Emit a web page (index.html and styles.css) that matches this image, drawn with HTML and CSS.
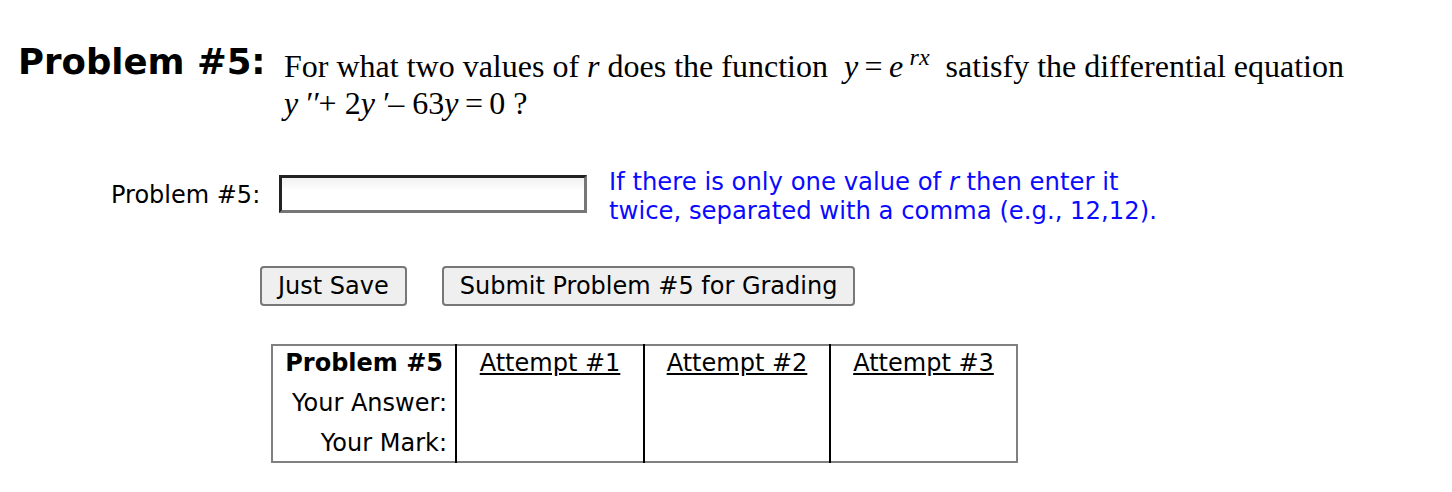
FILE: index.html
```html
<!DOCTYPE html>
<html>
<head>
<meta charset="utf-8">
<link rel="stylesheet" href="styles.css">
</head>
<body>
<div class="problem">
  <div class="ptitle">Problem #5:</div>
  <div class="question">For what two values of <i>r</i> does the function &nbsp;<i>y</i>&thinsp;=&thinsp;<i>e</i>&thinsp;<sup class="sup"><i>rx</i></sup>&nbsp; satisfy the differential equation<br><i>y</i>&thinsp;<span class="prime">′′</span>+ 2<i>y</i>&thinsp;<span class="prime">′</span>– 63<i>y</i>&thinsp;=&thinsp;0 ?</div>
</div>
<div class="answer-row">
  <label class="alabel">Problem #5:</label>
  <input class="ainput" type="text">
  <div class="hint">If there is only one value of <i>r</i> then enter it<br>twice, separated with a comma (e.g., 12,12).</div>
</div>
<div class="buttons">
  <button class="btn">Just Save</button>
  <button class="btn">Submit Problem #5 for Grading</button>
</div>
<table class="attempts">
  <colgroup>
    <col class="c1"><col class="c2"><col class="c3"><col class="c4">
  </colgroup>
  <tr class="r1">
    <th class="rowhead">Problem #5</th>
    <td class="ahead"><u>Attempt #1</u></td>
    <td class="ahead"><u>Attempt #2</u></td>
    <td class="ahead"><u>Attempt #3</u></td>
  </tr>
  <tr class="r2">
    <td class="rowlabel">Your Answer:</td>
    <td class="cell"></td>
    <td class="cell"></td>
    <td class="cell"></td>
  </tr>
  <tr class="r3">
    <td class="rowlabel">Your Mark:</td>
    <td class="cell"></td>
    <td class="cell"></td>
    <td class="cell"></td>
  </tr>
</table>
</body>
</html>
```
FILE: styles.css
```css
html, body {
  margin: 0;
  padding: 0;
  background: #fff;
  color: #000;
  font-family: "DejaVu Sans", Verdana, sans-serif;
}
.problem {
  display: flex;
  align-items: flex-start;
  padding: 40px 0 0 18px;
}
.ptitle {
  font-weight: bold;
  font-size: 35.5px;
  width: 266px;
  line-height: 44px;
  white-space: nowrap;
}
.question {
  font-family: "Liberation Serif", "Times New Roman", serif;
  font-size: 32px;
  line-height: 37px;
  padding-top: 8px;
}
.sup {
  font-size: 24px;
  vertical-align: 12px;
  line-height: 0;
}
.prime {
  font-size: 32px;
  font-style: italic;
  line-height: 0;
}
.answer-row {
  display: flex;
  align-items: flex-start;
  margin-top: 45px;
  padding-left: 111px;
}
.alabel {
  font-size: 24px;
  line-height: 28px;
  margin-top: 14px;
  width: 168px;
  white-space: nowrap;
}
.ainput {
  box-sizing: border-box;
  width: 308px;
  height: 38px;
  margin: 8px 0 0 0;
  border: 3px solid;
  border-color: #222 #777 #777 #222;
  background: linear-gradient(#f1f1f1, #fff 40%);
  padding: 0;
}
.hint {
  color: #0a0aff;
  font-size: 24.3px;
  line-height: 29px;
  margin-left: 22px;
}
.buttons {
  display: flex;
  gap: 35px;
  margin-top: 41px;
  padding-left: 260px;
}
.btn {
  font-family: "DejaVu Sans", Verdana, sans-serif;
  font-size: 24px;
  height: 40px;
  padding: 0 16px;
  background: #efefef;
  border: 2px solid #777;
  border-radius: 4px;
  color: #000;
}
.attempts {
  margin: 38px 0 0 271px;
  border-collapse: collapse;
  border: 2px solid #808080;
  font-size: 24px;
  table-layout: fixed;
  width: 745px;
}
.c1 { width: 184px; }
.c2 { width: 188px; }
.c3 { width: 186px; }
.c4 { width: 187px; }
.attempts td, .attempts th {
  padding: 3px 8px 0;
  vertical-align: top;
  line-height: 28px;
}
.r1 td, .r1 th, .r2 td { height: 37px; }
.r3 td { height: 32px; }
.attempts .rowhead {
  text-align: right;
  font-weight: bold;
  padding-right: 12px;
  border-right: 2px solid #000;
}
.rowlabel {
  text-align: right;
  border-right: 2px solid #000;
}
.ahead {
  text-align: center;
  border-right: 2px solid #000;
}
.cell {
  border-right: 2px solid #000;
}
.attempts tr td:last-child {
  border-right: none;
}
```
